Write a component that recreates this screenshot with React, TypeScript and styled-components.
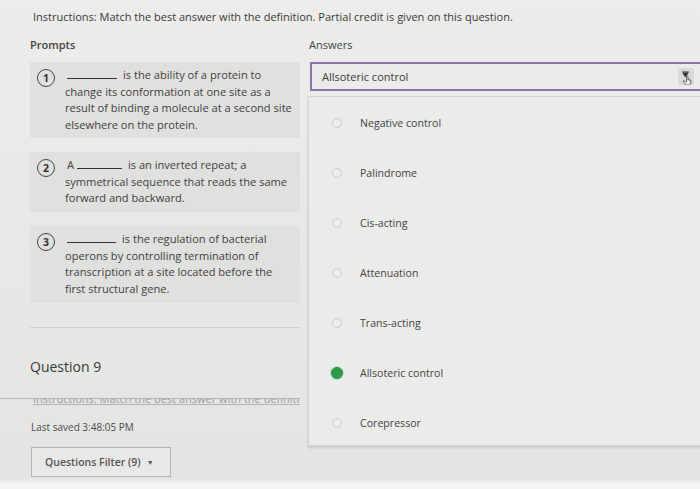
import React from 'react';
import styled, { createGlobalStyle } from 'styled-components';

const GlobalStyle = createGlobalStyle`
  html, body {
    margin: 0;
    padding: 0;
    background: #e9e9e7;
    overflow: hidden;
  }
  body {
    font-family: 'Open Sans', 'Noto Sans', sans-serif;
    color: #3e3e3e;
  }
`;

const Page = styled.div`
  width: 700px;
  height: 489px;
  position: relative;
  background: linear-gradient(180deg, #ececea 0%, #e7e8e6 60%, #e4e5e3 98%, #f4f4f4 99%);
`;

const Instructions = styled.div`
  font-size: 11px;
  padding: 9px 0 0 33px;
  height: 17px;
  color: #3a3a3a;
`;

const Columns = styled.div`
  display: grid;
  grid-template-columns: 308px 1fr;
`;

const Left = styled.div`
  padding: 11px 8px 0 30px;
`;

const Right = styled.div`
  position: relative;
  padding-top: 11px;
`;

const Heading = styled.div`
  font-size: 11px;
  font-weight: 600;
  color: #444;
  height: 18px;
`;

const AnswersHeading = styled(Heading)`
  font-weight: 500;
  padding-left: 1px;
`;

const PromptList = styled.div`
  display: flex;
  flex-direction: column;
  gap: 14px;
  margin-top: 7px;
  padding-bottom: 24px;
  border-bottom: 1px solid #cfd0ce;
`;

const Card = styled.div<{ $h: number }>`
  display: flex;
  gap: 10px;
  height: ${({ $h }) => $h}px;
  background: #e0e1df;
  padding: 5px 4px 0 7px;
  box-sizing: border-box;
  width: 270px;
`;

const Num = styled.div`
  flex: none;
  width: 18px;
  height: 18px;
  box-sizing: border-box;
  border: 1.6px solid #444;
  border-radius: 50%;
  font-size: 10.5px;
  font-weight: 700;
  display: flex;
  align-items: center;
  justify-content: center;
  color: #333;
  margin-top: 2px;
`;

const PromptText = styled.div`
  width: 229px;
  font-size: 11.1px;
  line-height: 16.6px;
  color: #404040;
`;

const Blank = styled.span<{ $w: number }>`
  display: inline-block;
  width: ${({ $w }) => $w}px;
  border-bottom: 1px solid #333;
  margin: 0 6px 0 0;
  vertical-align: baseline;
`;

const FirstLine = styled.span`
  padding-left: 2px;
`;

const QuestionTitle = styled.div`
  font-size: 14px;
  line-height: 19px;
  color: #3a3a3a;
  margin-top: 29px;
`;

const Faded = styled.div`
  margin: 22px 0 0 -30px;
  padding-left: 33px;
  height: 7px;
  overflow: hidden;
  white-space: nowrap;
  border-top: 1px solid #b4b7b5;
`;

const FadedText = styled.div`
  font-size: 11px;
  line-height: 14px;
  margin-top: -7px;
  color: #979d9a;
  text-decoration: underline;
  text-decoration-color: #b0b4b1;
`;

const Saved = styled.div`
  font-size: 10px;
  line-height: 14px;
  color: #4a4a4a;
  margin: 14px 0 0 1px;
`;

const FilterButton = styled.button`
  margin: 13px 0 0 1px;
  width: 140px;
  height: 30px;
  box-sizing: border-box;
  border: 1px solid #b3b5b3;
  background: #e8e9e7;
  font-family: inherit;
  font-size: 10.5px;
  font-weight: 600;
  color: #555;
  display: flex;
  align-items: center;
  gap: 6px;
  padding: 0 0 0 13px;
`;

const Caret = styled.span`
  font-size: 7px;
  color: #555;
`;

const Select = styled.div`
  margin: 7px 0 0 2px;
  height: 29px;
  box-sizing: border-box;
  border: 2px solid #8d73a4;
  border-right: none;
  display: flex;
  align-items: center;
  padding-left: 10px;
  font-size: 11px;
  color: #3c3c3c;
  position: relative;
`;

const ArrowBox = styled.div`
  position: absolute;
  right: 6px;
  top: 4px;
  width: 16px;
  height: 17px;
  background: #d9d9d9;
`;

const Menu = styled.div`
  position: absolute;
  left: 0;
  top: 70px;
  width: 400px;
  height: 350px;
  box-sizing: border-box;
  border: 1px solid #d3d4d2;
  box-shadow: 0 2px 3px rgba(0, 0, 0, 0.12);
  background: #ebebea;
  padding-top: 16px;
  display: flex;
  flex-direction: column;
  gap: 30px;
`;

const Option = styled.div`
  display: flex;
  align-items: center;
  height: 20px;
  padding-left: 23px;
  font-size: 10.6px;
  color: #444;
`;

const Radio = styled.span<{ $on?: boolean }>`
  width: ${({ $on }) => ($on ? 12 : 10)}px;
  height: ${({ $on }) => ($on ? 12 : 10)}px;
  border-radius: 50%;
  box-sizing: border-box;
  border: 1px solid ${({ $on }) => ($on ? '#2b8c45' : '#c9cbc9')};
  background: ${({ $on }) => ($on ? '#2f9a4e' : '#ededec')};
  box-shadow: ${({ $on }) => ($on ? '0 0 2px #6dc58a' : 'none')};
  margin: 0 ${({ $on }) => ($on ? 17 : 18)}px 0 ${({ $on }) => ($on ? -1 : 0)}px;
`;

const options = [
  'Negative control',
  'Palindrome',
  'Cis-acting',
  'Attenuation',
  'Trans-acting',
  'Allsoteric control',
  'Corepressor',
];

export default function App() {
  return (
    <Page>
      <GlobalStyle />
      <Instructions>
        Instructions: Match the best answer with the definition. Partial credit is given on this question.
      </Instructions>
      <Columns>
        <Left>
          <Heading>Prompts</Heading>
          <PromptList>
            <Card $h={76}>
              <Num>1</Num>
              <PromptText>
                <FirstLine>
                  <Blank $w={50} />
                  is the ability of a protein to
                </FirstLine>
                <br />
                change its conformation at one site as a result of binding a molecule at a second site
                elsewhere on the protein.
              </PromptText>
            </Card>
            <Card $h={60}>
              <Num>2</Num>
              <PromptText>
                <FirstLine>
                  A <Blank $w={45} />
                  is an inverted repeat; a
                </FirstLine>
                <br />
                symmetrical sequence that reads the same forward and backward.
              </PromptText>
            </Card>
            <Card $h={77}>
              <Num>3</Num>
              <PromptText>
                <FirstLine>
                  <Blank $w={49} />
                  is the regulation of bacterial
                </FirstLine>
                <br />
                operons by controlling termination of transcription at a site located before the
                first structural gene.
              </PromptText>
            </Card>
          </PromptList>
          <QuestionTitle>Question 9</QuestionTitle>
          <Faded>
            <FadedText>Instructions: Match the best answer with the definitio</FadedText>
          </Faded>
          <Saved>Last saved 3:48:05 PM</Saved>
          <FilterButton>
            Questions Filter (9) <Caret>▼</Caret>
          </FilterButton>
        </Left>
        <Right>
          <AnswersHeading>Answers</AnswersHeading>
          <Select>
            Allsoteric control
            <ArrowBox>
              <svg width="16" height="17" viewBox="0 0 16 17">
                <path d="M4 4h7M5 5h5l-2.5 4z" stroke="#333" strokeWidth="1" fill="#333" />
                <path
                  d="M8.5 9v5.5M8.5 9c0-1 1.5-1 1.5 0v3c0-0.8 1.4-0.8 1.4 0v0.5c0-0.8 1.4-0.8 1.4 0v2.5c0 1.5-1 2-2 2h-2c-1 0-1.6-0.5-2.2-1.5l-1.2-2c-0.4-0.8 0.6-1.4 1.2-0.6l0.6 0.8"
                  stroke="#444"
                  strokeWidth="0.8"
                  fill="#f2f2f2"
                />
              </svg>
            </ArrowBox>
          </Select>
          <Menu>
            {options.map((o) => (
              <Option key={o}>
                <Radio $on={o === 'Allsoteric control'} />
                {o}
              </Option>
            ))}
          </Menu>
        </Right>
      </Columns>
    </Page>
  );
}
